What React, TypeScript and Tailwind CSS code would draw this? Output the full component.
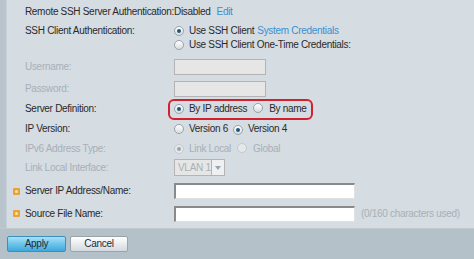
import React from 'react';

const Radio: React.FC<{ checked?: boolean; disabled?: boolean }> = ({ checked, disabled }) => (
  <span
    className={`inline-flex items-center justify-center w-[10px] h-[10px] rounded-full border ${
      disabled ? 'border-[#c3c9ce] bg-[#e4e8eb]' : 'border-[#9aa3aa] bg-gradient-to-b from-[#ffffff] to-[#d8dde1]'
    }`}
  >
    {checked && (
      <span className={`w-[4px] h-[4px] rounded-full ${disabled ? 'bg-[#9aa3aa]' : 'bg-[#1d5a78]'}`} />
    )}
  </span>
);

const Star: React.FC = () => (
  <svg width="7" height="7" viewBox="0 0 7 7" className="shrink-0">
    <rect x="0" y="0" width="7" height="7" rx="1" fill="#e9a235" />
    <circle cx="3.5" cy="3.5" r="1.5" fill="#fbe3a8" />
  </svg>
);

const Row: React.FC<any> = ({ label, h, disabled, req, children }) => (
  <div className={`flex items-center ${h}`}>
    <div className="w-[175px] shrink-0 flex items-center">
      <div className="w-[26px] flex justify-end pr-[5px]">{req && <Star />}</div>
      <span className={disabled ? 'text-[#a8b0b7]' : 'text-[#2a2a2a]'}>{label}</span>
    </div>
    <div className="flex items-center">{children}</div>
  </div>
);

const App: React.FC = () => {
  return (
    <div
      className="w-[474px] h-[259px] flex flex-col bg-[#d5dce2] text-[10px] tracking-[-0.3px] leading-none whitespace-nowrap overflow-hidden"
      style={{ fontFamily: '"Liberation Sans", Arial, sans-serif' }}
    >
      <div className="flex h-[229px] border-b border-[#c0c9d0]">
        <div className="w-[7px] bg-[#b9c4cc] border-r border-[#c8d1d8]" />
        <div className="flex-1 flex flex-col pt-[2px] -ml-[8px]">
          <Row label="Remote SSH Server Authentication:" h="h-[20px]">
            <span className="text-[#2a2a2a]">Disabled</span>
            <span className="ml-[6px] text-[#3a8fd0]">Edit</span>
          </Row>

          <div className="flex pt-[2px] h-[32px]">
            <div className="w-[175px] shrink-0 flex h-[14px] items-center">
              <div className="w-[26px]" />
              <span className="text-[#2a2a2a]">SSH Client Authentication:</span>
            </div>
            <div className="flex flex-col">
              <div className="flex items-center h-[14px]">
                <Radio checked />
                <span className="ml-[5px] text-[#2a2a2a]">Use SSH Client</span>
                <span className="ml-[3px] text-[#3a8fd0]">System Credentials</span>
              </div>
              <div className="flex items-center h-[14px]">
                <Radio />
                <span className="ml-[5px] text-[#2a2a2a]">Use SSH Client One-Time Credentials:</span>
              </div>
            </div>
          </div>

          <Row label="Username:" h="h-[22px] mt-[2px]" disabled>
            <div className="w-[92px] h-[16px] bg-[#e6e6e6] border border-[#b4b4b4]" />
          </Row>
          <Row label="Password:" h="h-[21px]" disabled>
            <div className="w-[92px] h-[16px] bg-[#e6e6e6] border border-[#b4b4b4]" />
          </Row>
          <Row label="Server Definition:" h="h-[20px]">
            <div className="-ml-[6px] h-[21px] flex items-center border-2 border-[#d3202f] rounded-[6px] pl-[4px] pr-[4px]">
              <Radio checked />
              <span className="ml-[5px] text-[#2a2a2a]">By IP address</span>
              <span className="ml-[6px]"><Radio /></span>
              <span className="ml-[6px] text-[#2a2a2a]">By name</span>
            </div>
          </Row>
          <Row label="IP Version:" h="h-[20px]">
            <Radio />
            <span className="ml-[5px] text-[#2a2a2a]">Version 6</span>
            <span className="ml-[5px]"><Radio checked /></span>
            <span className="ml-[5px] text-[#2a2a2a]">Version 4</span>
          </Row>
          <Row label="IPv6 Address Type:" h="h-[19px]" disabled>
            <Radio checked disabled />
            <span className="ml-[5px] text-[#a8b0b7]">Link Local</span>
            <span className="ml-[6px]"><Radio disabled /></span>
            <span className="ml-[6px] text-[#a8b0b7]">Global</span>
          </Row>
          <Row label="Link Local Interface:" h="h-[19px]" disabled>
            <div className="w-[51px] h-[17px] flex border border-[#b4b4b4] bg-[#e6e6e6]">
              <span className="flex-1 flex items-center pl-[3px] text-[#a8b0b7]">VLAN 1</span>
              <span className="w-[13px] border-l border-[#b4b4b4] bg-[#eef0f2] flex items-center justify-center">
                <svg width="6" height="4" viewBox="0 0 6 4"><path d="M0 0h6L3 4z" fill="#9aa3aa" /></svg>
              </span>
            </div>
          </Row>
          <Row label="Server IP Address/Name:" h="h-[22px] mt-[3px]" req>
            <div className="w-[181px] h-[16px] bg-white border-t-2 border-l-2 border-r border-b border-t-[#8a8a8a] border-l-[#8a8a8a] border-r-[#e0e0e0] border-b-[#e0e0e0]" />
          </Row>
          <Row label="Source File Name:" h="h-[23px]" req>
            <div className="w-[181px] h-[16px] bg-white border-t-2 border-l-2 border-r border-b border-t-[#8a8a8a] border-l-[#8a8a8a] border-r-[#e0e0e0] border-b-[#e0e0e0]" />
            <span className="ml-[6px] text-[#a8b0b7]">(0/160 characters used)</span>
          </Row>
        </div>
      </div>

      <div className="flex-1 bg-[#b5c1c9] flex items-start pt-[7px] pl-[7px] gap-[4px]">
        <button className="w-[59px] h-[16px] rounded-[2px] border border-[#3b8fbf] bg-gradient-to-b from-[#a9e0f6] via-[#6cc4ec] to-[#3fa8da] text-[#1b2a36] text-[10px] leading-none">
          Apply
        </button>
        <button className="w-[58px] h-[16px] rounded-[2px] border border-[#9aa3aa] bg-gradient-to-b from-[#ffffff] to-[#d3d9de] text-[#1b2a36] text-[10px] leading-none">
          Cancel
        </button>
      </div>
    </div>
  );
};

export default App;
